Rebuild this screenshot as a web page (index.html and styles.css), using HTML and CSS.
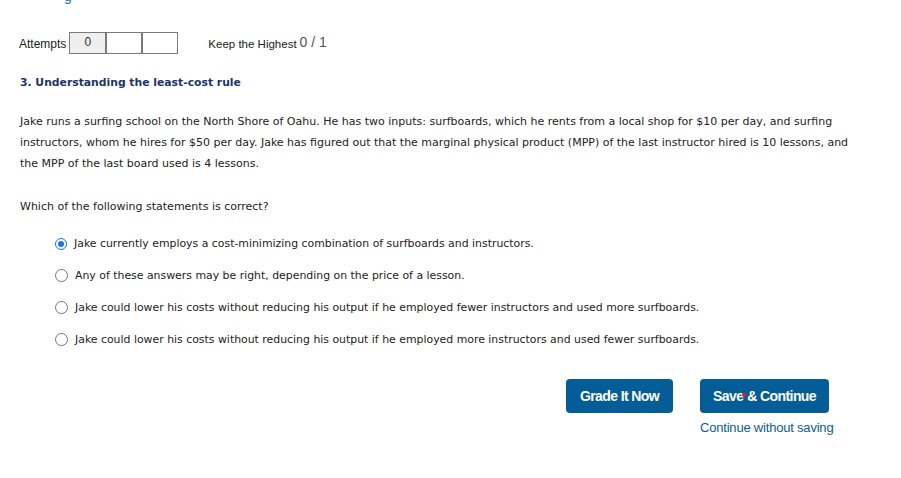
FILE: index.html
```html
<!DOCTYPE html>
<html>
<head>
<meta charset="utf-8">
<link rel="stylesheet" href="styles.css">
</head>
<body>
<div class="page">
  <div class="topcut"><span class="toplink">g</span></div>
  <div class="attempts-row">
    <span class="label">Attempts</span>
    <div class="boxes">
      <div class="box used">0</div>
      <div class="box"></div>
      <div class="box"></div>
    </div>
    <span class="keep">Keep the Highest</span>
    <span class="score">0 / 1</span>
  </div>
  <h3 class="title">3. Understanding the least-cost rule</h3>
  <p class="text">Jake runs a surfing school on the North Shore of Oahu. He has two inputs: surfboards, which he rents from a local shop for $10 per day, and surfing instructors, whom he hires for $50 per day. Jake has figured out that the marginal physical product (MPP) of the last instructor hired is 10 lessons, and the MPP of the last board used is 4 lessons.</p>
  <p class="text question">Which of the following statements is correct?</p>
  <div class="options">
    <label class="option"><span class="radio checked"></span>Jake currently employs a cost-minimizing combination of surfboards and instructors.</label>
    <label class="option"><span class="radio"></span>Any of these answers may be right, depending on the price of a lesson.</label>
    <label class="option"><span class="radio"></span>Jake could lower his costs without reducing his output if he employed fewer instructors and used more surfboards.</label>
    <label class="option"><span class="radio"></span>Jake could lower his costs without reducing his output if he employed more instructors and used fewer surfboards.</label>
  </div>
  <div class="actions">
    <button class="btn">Grade It Now</button>
    <div class="save-col">
      <button class="btn save">Save<span class="dot"></span>&amp; Continue</button>
      <a class="skip">Continue without saving</a>
    </div>
  </div>
</div>
</body>
</html>
```
FILE: styles.css
```css
html, body {
  margin: 0;
  padding: 0;
  background: #ffffff;
}
.page {
  width: 901px;
  height: 478px;
  overflow: hidden;
  position: relative;
}
.topcut {
  height: 0;
  position: relative;
}
.toplink {
  position: absolute;
  left: 64px;
  top: -12px;
  font: 14px "Liberation Sans", Arial, sans-serif;
  color: #1a73b8;
}
.attempts-row {
  display: flex;
  align-items: center;
  padding: 32px 0 0 19px;
  height: 22px;
  font-family: "Liberation Sans", Arial, sans-serif;
}
.label {
  font-size: 12px;
  color: #222;
  margin-right: 3px;
  position: relative;
  top: 1px;
}
.boxes {
  display: flex;
  border: 1px solid #7a7a7a;
  height: 20px;
}
.box {
  width: 34px;
  height: 20px;
  border-left: 2px solid #7a7a7a;
  font-size: 12px;
  color: #333;
  text-align: center;
  line-height: 19px;
}
.box:first-child {
  border-left: none;
  width: 35px;
}
.box.used {
  background: #eeeeee;
}
.keep {
  font-size: 11.5px;
  color: #222;
  margin-left: 30px;
  position: relative;
  top: 1px;
}
.score {
  font-size: 14px;
  color: #555;
  margin-left: 3px;
  position: relative;
  top: -1px;
}
.title {
  margin: 22px 0 0 20px;
  font: bold 10.8px "DejaVu Sans", Verdana, sans-serif;
  color: #1d3466;
  line-height: 14px;
}
.text {
  margin: 0 0 0 20px;
  width: 835px;
  font: 11px "DejaVu Sans", Verdana, sans-serif;
  color: #222;
  line-height: 21px;
}
.title + .text {
  margin-top: 21px;
}
.question {
  margin-top: 22px;
}
.options {
  margin: 16px 0 0 55px;
  display: flex;
  flex-direction: column;
  gap: 11px;
}
.option {
  display: flex;
  align-items: center;
  height: 21px;
  font: 10.9px "DejaVu Sans", Verdana, sans-serif;
  color: #222;
}
.radio {
  width: 11px;
  height: 11px;
  border: 1px solid #767676;
  border-radius: 50%;
  margin-right: 7px;
  box-sizing: content-box;
  position: relative;
  flex: none;
}
.radio.checked {
  border: 1.5px solid #1a73e8;
  width: 10px;
  height: 10px;
}
.radio.checked::after {
  content: "";
  position: absolute;
  left: 2px;
  top: 2px;
  width: 6px;
  height: 6px;
  border-radius: 50%;
  background: #1a73e8;
}
.actions {
  display: flex;
  margin: 29px 0 0 566px;
  gap: 27px;
}
.btn {
  height: 34px;
  width: 107px;
  border: none;
  border-radius: 4px;
  background: #045d96;
  color: #fff;
  font: bold 14px "Liberation Sans", Arial, sans-serif;
  letter-spacing: -0.6px;
  padding: 0;
  position: relative;
}
.btn.save {
  width: 129px;
}
.dot {
  display: inline-block;
  width: 4px;
  height: 4px;
  border-radius: 50%;
  background: #e02020;
  margin: 0 1px 0 -1px;
  position: relative;
  top: -4px;
}
.save-col {
  display: flex;
  flex-direction: column;
}
.skip {
  margin-top: 7px;
  font: 13px "Liberation Sans", Arial, sans-serif;
  color: #0a5d96;
  letter-spacing: -0.2px;
}
```
